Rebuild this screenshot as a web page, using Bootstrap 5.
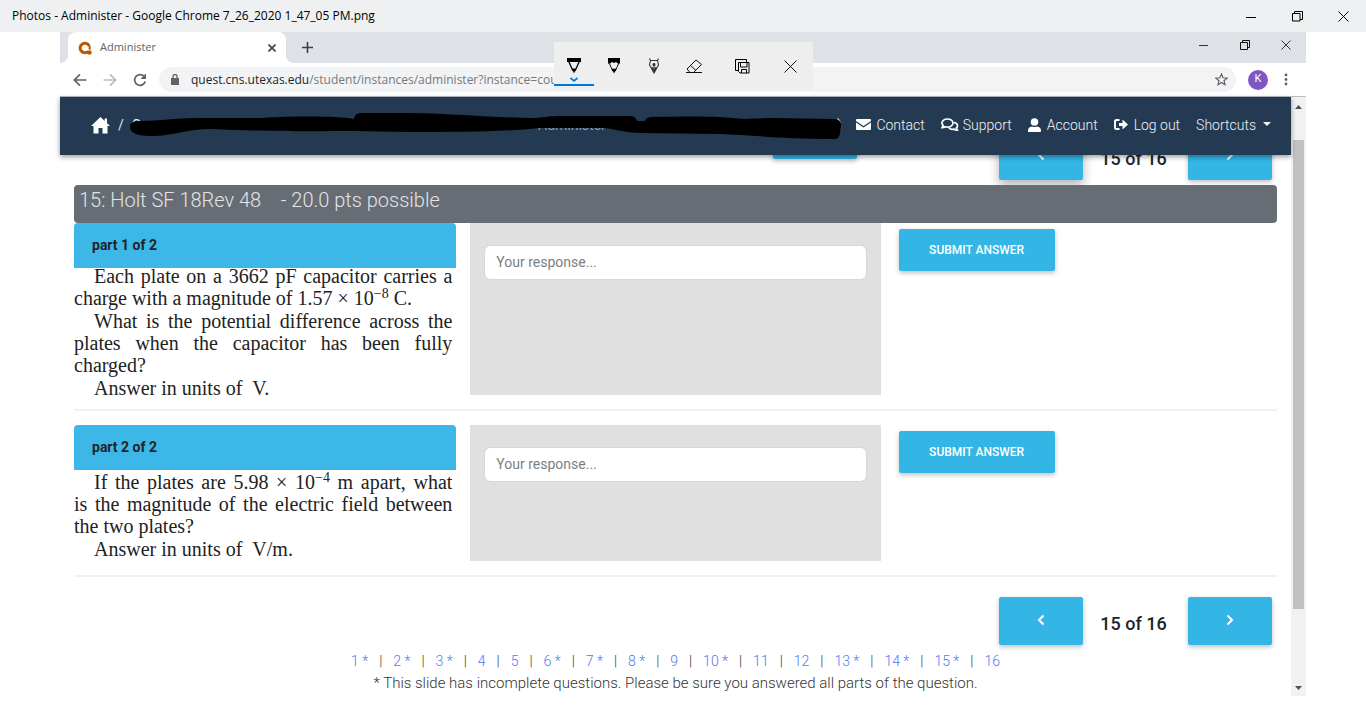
<!DOCTYPE html>
<html lang="en">
<head>
<meta charset="utf-8">
<meta name="viewport" content="width=device-width, initial-scale=1">
<title>Photos - Administer</title>
<link href="https://cdn.jsdelivr.net/npm/bootstrap@5.3.0/dist/css/bootstrap.min.css" rel="stylesheet">
<style>
body { font-family: Roboto, sans-serif; font-size: 14px; color: #212529; background: #fff; }
button { background: none; border: 0; padding: 0; color: inherit; }
svg { display: block; flex: none; }
a { text-decoration: none; }
.ui-font { font-family: "Open Sans", sans-serif; }
.photos-bar { height: 32px; background: #eff0f1; color: #000; font-size: 12px; padding-left: 12px; }
.photos-bar button { width: 46px; height: 32px; }
.browser { margin: 0 60px 32px; }
.tab-strip { height: 31px; background: #dee1e6; padding-left: 8px; }
.tab-strip .win-btn { width: 41px; height: 26px; color: #222; }
.page-tab { position: relative; width: 218px; background: #fff; border-radius: 8px 8px 0 0; padding: 0 10px; font-size: 11px; color: #5f6368; }
.page-tab::before, .page-tab::after { content: ""; position: absolute; bottom: 0; width: 8px; height: 8px; }
.page-tab::before { left: -8px; background: radial-gradient(circle at 0 0, #dee1e6 8px, #fff 8px); }
.page-tab::after { right: -8px; background: radial-gradient(circle at 100% 0, #dee1e6 8px, #fff 8px); }
.tool-row { height: 34px; padding: 0 18px 0 13px; border-bottom: 1px solid #b9bcc0; color: #5f6368; }
.address { height: 25px; border-radius: 13px; background: #f1f3f4; padding: 0 8px 0 12px; margin-left: 12px; font-size: 12px; color: #77797c; }
.avatar { width: 20px; height: 20px; border-radius: 50%; background: #7e57c2; color: #fff; font-size: 11px; margin: 0 16px 0 12px; }
.ink-bar { position: absolute; left: 494px; top: 10px; width: 259px; height: 48px; background: #eee; z-index: 20; }
.ink-bar button { flex: none; width: 40px; height: 48px; }
.ink-bar .wide-btn { width: 48px; }
.ink-bar .active { border-bottom: 2px solid #0078d7; height: 44px; padding-top: 14px; }
.site-nav { height: 58px; background: #243a52; color: #dfe3e8; padding: 0 20px 2px 31px; box-shadow: 0 2px 5px rgba(0,0,0,.4); z-index: 5; position: relative; }
.site-nav a { color: #f1f3f5; }
.nav-right { font-weight: 300; }
.scribble { position: absolute; left: 70px; top: 15px; }
.crumb-here { position: absolute; left: 478px; color: #8e9aa7; }
.crumb-end { position: absolute; left: 777px; }
.gutter { padding: 0 14px; }
.scrolled { margin-top: -23px; }
.pager { padding-right: 5px; }
.btn-sky { background: #33b5e5; color: #fff; border-radius: 2px; box-shadow: 0 2px 5px rgba(0,0,0,.25); display: flex; align-items: center; justify-content: center; font-size: 12px; font-weight: 500; }
.btn-page { width: 84px; height: 48px; padding-bottom: 3px; }
.btn-raised { box-shadow: 0 5px 11px rgba(0,0,0,.3); }
.btn-peek { width: 84px; height: 27px; margin-right: 142px; }
.btn-submit { width: 156px; height: 42px; margin: 6px 0 0 18px; }
.page-count { width: 105px; padding-top: 3px; padding-right: 4px; font-size: 18px; font-weight: 500; line-height: 48px; height: 48px; }
.q-title { margin-top: 5px; height: 38px; padding-left: 5px; border-radius: 4px; background: #666d75; color: #e4e4e4; font-size: 20px; font-weight: 300; line-height: 30px; white-space: pre; }
.part-head { height: 45px; padding-left: 18px; background: #3cb7e7; border-radius: 4px 4px 0 0; font-weight: 700; line-height: 44px; }
.tex { font-family: "Liberation Serif", serif; font-size: 20px; line-height: 22px; margin-right: 4px; padding: 1px 0; color: #222; }
.tex p { margin: 0 0 1px; text-indent: 20px; text-align: justify; }
.tex p:last-child { margin: 0; }
.tex .full { text-align-last: justify; display: block; }
.tex .next { text-indent: 0; display: block; }
.tex sup { font-size: 14px; line-height: 0; }
.tex-first { margin-top: -4px; margin-bottom: -5px; }
.answer { background: #e0e0e0; padding: 22px 14px 0; }
.answer .form-control { height: 35px; font-size: 14px; padding: 0 11px 2px; border-color: #d5d9de; }
.answer .form-control::placeholder { color: #7b8086; }
.rule { height: 2px; background: #f1f1f1; margin: 14px 0; }
.bottom-pager { margin-top: 20px; }
.slides { font-weight: 300; gap: 11px; line-height: 22px; margin-top: 5px; color: #333; }
.slides a { color: #4d79f6; }
.note { font-size: 15px; font-weight: 300; line-height: 22px; color: #333; }
.track { width: 15px; background: #f1f1f1; padding: 4px 0 6px; }
.thumb { width: 11px; background: #c1c1c1; height: 469px; margin-top: 31px; }
</style>
</head>
<body class="d-flex flex-column min-vh-100">
<header class="photos-bar ui-font d-flex align-items-center">
  <span class="me-auto">Photos - Administer - Google Chrome 7_26_2020 1_47_05 PM.png</span>
  <button aria-label="Minimize"><svg class="mx-auto" width="11" height="11" stroke="#000"><path d="M0 6.500h10"/></svg></button>
  <button aria-label="Restore"><svg class="mx-auto" width="11" height="11" fill="none" stroke="#000"><path d="M.5 2.500h7.500v7.500H.5zM2.500 2.500v-2h8v8H8"/></svg></button>
  <button aria-label="Close"><svg class="mx-auto" width="11" height="11" stroke="#000"><path d="M.5.500l10 10M10.500.500l-10 10"/></svg></button>
</header>

<div class="browser position-relative flex-grow-1 d-flex flex-column">
  <div class="tab-strip ui-font d-flex">
    <div class="page-tab d-flex align-items-center">
      <svg width="14" height="14" viewBox="0 0 14 14"><path d="M10.500 10.200A4.800 4.800 0 1 1 11.300 5" fill="none" stroke="#bf5700" stroke-width="3"/><path d="M11 4.500Q12.500 6.500 11.300 8.500" fill="none" stroke="#bf5700" stroke-width="2"/><circle cx="11.500" cy="11.500" r="2.200" fill="#bf5700"/></svg>
      <span class="ms-2 me-auto">Administer</span>
      <button aria-label="Close tab"><svg width="8" height="8" stroke="#3c4043" stroke-width="1.600"><path d="M.5.500l7 7M7.500.500l-7 7"/></svg></button>
    </div>
    <button class="ms-3 me-auto" aria-label="New tab"><svg width="11" height="11" stroke="#3c4043" stroke-width="1.600"><path d="M0 5.500h11M5.500 0v11"/></svg></button>
    <button class="win-btn" aria-label="Minimize"><svg class="mx-auto" width="10" height="10" stroke="#333"><path d="M0 5.500h9"/></svg></button>
    <button class="win-btn" aria-label="Restore"><svg class="mx-auto" width="10" height="10" fill="none" stroke="#111"><path d="M.5 2.500h7v7h-7zM2.500 2.500v-2h7v7h-2"/></svg></button>
    <button class="win-btn" aria-label="Close"><svg class="mx-auto" width="10" height="10" stroke="#333"><path d="M.5.500l9 9M9.500.500l-9 9"/></svg></button>
  </div>
  <div class="tool-row d-flex align-items-center">
    <button aria-label="Back"><svg width="14" height="14" fill="none" stroke="#5f6368" stroke-width="1.700"><path d="M13.500 7H1.500M7 1.300L1.300 7 7 12.700"/></svg></button>
    <button class="ms-3" aria-label="Forward"><svg width="14" height="14" fill="none" stroke="#babcbe" stroke-width="1.700"><path d="M.5 7h12M7 1.300L12.700 7 7 12.700"/></svg></button>
    <button class="ms-3" aria-label="Reload"><svg width="14" height="14" fill="none" stroke="#5f6368" stroke-width="1.800"><path d="M12.200 8.500A5.400 5.400 0 1 1 11 3.300"/><path d="M13 .5V6H7.500z" fill="#5f6368" stroke="none"/></svg></button>
    <div class="address ui-font d-flex align-items-center flex-grow-1">
      <svg width="8" height="11"><path d="M0 4h8v7H0z" fill="#5f6368"/><path d="M2 4V2.500a2 2 0 0 1 4 0V4" fill="none" stroke="#5f6368" stroke-width="1.300"/></svg>
      <span class="ms-2 ps-1 me-auto"><span class="text-dark">quest.cns.utexas.edu</span>/student/instances/administer?instance=cou</span>
      <button aria-label="Bookmark"><svg width="13" height="13" viewBox="0 0 13 13" fill="none" stroke="#5f6368" stroke-width="1.200"><path d="M6.500 1l1.600 3.800 4 .3-3.100 2.600 1 4-3.500-2.200L3 11.700l1-4L.9 5.100l4-.3z"/></svg></button>
    </div>
    <button class="avatar" aria-label="Profile">K</button>
    <button aria-label="Menu"><svg width="4" height="13" fill="#5f6368"><circle cx="2" cy="2" r="1.400"/><circle cx="2" cy="6.500" r="1.400"/><circle cx="2" cy="11" r="1.400"/></svg></button>
  </div>

  <div class="ink-bar d-flex">
    <button class="active" aria-label="Ballpoint pen"><svg class="mx-auto" width="16" height="28" viewBox="0 0 16 28"><path d="M1 2h14v4H1zM6 12.500h4l-2 5z"/><path d="M2.500 5L7 15M13.500 5L9 15" stroke="#000" stroke-width="1.300"/><path d="M4.500 22l3.500 3 3.500-3" fill="none" stroke="#0078d7" stroke-width="1.700"/></svg></button>
    <button aria-label="Pencil"><svg class="mx-auto" width="14" height="16"><path d="M1 0h12v5.500H1zM4.500 10.500h5l-2.500 5z"/><path d="M2 4l4 9M12 4l-4 9" stroke="#000" stroke-width="1.400"/><path d="M3 5.500l2-1.500 2 1 2-1 2 1.500-2 5H5z" fill="#eee"/></svg></button>
    <button aria-label="Calligraphy pen"><svg class="mx-auto" width="12" height="16" fill="none" stroke="#333" stroke-width="1.100"><path d="M1.500.500l1 2h7l1-2M2.500 2.500L1.500 7 6 15l4.500-8-1-4.500M4 9l2 5 2-5M6 13V6"/><circle cx="6" cy="6.500" r="1" fill="#222"/></svg></button>
    <button aria-label="Eraser"><svg class="mx-auto" width="17" height="15" fill="none" stroke="#111"><path d="M1 10L10 1l5.500 4.500-8 8H4zM4.500 6.500l5.500 5M7 13.500h9M0 13.500h4"/></svg></button>
    <button class="wide-btn ms-1" aria-label="Save"><svg class="mx-auto" width="15" height="15" fill="none" stroke="#000"><path d="M3.500 3.500h10.500v10.500H5L3.500 12.500zM5.500 3.500v4.500h6.500V3.500M6.500 14v-3.500h5V14M3 11.500H.500V.500h11V3"/></svg></button>
    <button class="wide-btn" aria-label="Close inking"><svg class="mx-auto" width="13" height="13" stroke="#111"><path d="M.5.500l12 12M12.500.500l-12 12"/></svg></button>
  </div>

  <div class="d-flex flex-grow-1">
    <main class="flex-grow-1">
      <nav class="site-nav d-flex align-items-center">
        <a href="#" aria-label="Home"><svg width="19" height="17" viewBox="0 0 19 17" fill="#fff"><path d="M9.500 0L0 9h2.500v7.500H7.500V11h4v5.500h5V9H19l-3-3V1.500h-2.300V4z"/></svg></a>
        <span class="ms-2 me-2">/</span><a href="#">C</a>
        <span class="crumb-here">Administer</span><span class="crumb-end">)</span>
        <svg class="scribble" width="714" height="28" viewBox="130 112 714 28"><path d="M130 127C130 122 134 121 140 121C160 121 175 118 195 118L260 118C300 116 335 116 354 119C355 115 356 113 362 113L410 113C460 114 500 118 535 118C545 117 550 116 560 116L630 116C634 116 636 118 637 121L645 121C646 118 648 117 653 117C690 116 720 116 745 119C770 117 800 119 835 119C841 120 842 124 841 128C840 131 841 139 834 139C780 139 750 135 720 134L640 133C620 132 615 129 605 128L540 128C500 132 460 132 410 132L355 131C320 131 280 132 210 129C180 130 175 136 150 136C138 136 130 133 130 127Z"/></svg>
        <div class="nav-right ms-auto d-flex align-items-center gap-3">
          <a href="#" class="d-flex align-items-center"><svg class="me-1" width="16" height="12" viewBox="0 0 16 12" fill="#fff"><path d="M0 1q0-1 1-1h13q1 0 1 1v1L7.500 7 0 2zM0 3.500L7.500 8.500 15 3.500V10q0 1-1 1H1q-1 0-1-1z"/></svg>Contact</a>
          <a href="#" class="d-flex align-items-center"><svg class="me-1" width="18" height="14" viewBox="0 0 18 14" fill="none" stroke="#fff" stroke-width="1.700"><path d="M6.500 1C3.400 1 1 2.700 1 5c0 1 .5 1.900 1.200 2.600L1 9.700c1.500 0 2.500-.4 3.200-.9 4 1 7.800-.8 7.800-3.800C12 2.700 9.600 1 6.500 1z"/><path d="M13 4.500c2 .3 3.500 1.500 3.500 3.300 0 .9-.4 1.700-1.200 2.300l1 2c-1.500 0-2.500-.4-3.200-.9-2 .4-4 0-5.200-1.200"/></svg>Support</a>
          <a href="#" class="d-flex align-items-center"><svg class="me-1" width="15" height="15" viewBox="0 0 15 15" fill="#fff"><circle cx="6.500" cy="4" r="3.800"/><path d="M0 14v-1.500Q0 9 4 8.500q2.500 1 5 0 4 .5 4 4V13q0 1-1 1z"/></svg>Account</a>
          <a href="#" class="d-flex align-items-center"><svg class="me-1" width="16" height="12" viewBox="0 0 16 12" fill="#fff"><path d="M5.500 0v2H2.500Q2 2 2 2.500v6q0 .5.500.5h3v2H2.500Q0 11 0 8.500v-6Q0 0 2.500 0zM5 4h3.500V.500L14 5.500 8.500 10.500V7H5z"/></svg>Log out</a>
          <a href="#" class="dropdown-toggle">Shortcuts&nbsp;</a>
        </div>
      </nav>
      <div class="gutter">
        <div class="scrolled pager d-flex justify-content-end">
          <button class="btn-sky btn-peek" aria-label="Save"></button>
          <button class="btn-sky btn-page btn-raised" aria-label="Previous slide"><svg width="8" height="12" fill="none" stroke="#fff" stroke-width="2"><path d="M6.500 1.500L2 6l4.500 4.500"/></svg></button>
          <span class="page-count text-center">15 of 16</span>
          <button class="btn-sky btn-page" aria-label="Next slide"><svg width="8" height="12" fill="none" stroke="#fff" stroke-width="2"><path d="M1.500 1.500L6 6l-4.500 4.500"/></svg></button>
        </div>
        <h1 class="q-title mb-0 position-relative">15: Holt SF 18Rev 48    - 20.0 pts possible</h1>
      </div>

      <section class="row g-0">
        <div class="col-4 gutter">
          <div class="part-head">part 1 of 2</div>
          <div class="tex tex-first position-relative">
            <p><span class="full">Each plate on a 3662 pF capacitor carries a</span><span class="next">charge with a magnitude of 1.57 × 10<sup>−8</sup> C.</span></p>
            <p><span class="full">What is the potential difference across the</span><span class="full next">plates when the capacitor has been fully</span><span class="next">charged?</span></p>
            <p>Answer in units of &nbsp;V.</p>
          </div>
        </div>
        <div class="col-4 answer"><input class="form-control" type="text" placeholder="Your response..." aria-label="Response to part 1"></div>
        <div class="col-4"><button class="btn-sky btn-submit">SUBMIT ANSWER</button></div>
      </section>
      <div class="gutter"><div class="rule"></div></div>
      <section class="row g-0">
        <div class="col-4 gutter">
          <div class="part-head">part 2 of 2</div>
          <div class="tex">
            <p><span class="full">If the plates are 5.98 × 10<sup>−4</sup> m apart, what</span><span class="full next">is the magnitude of the electric field between</span><span class="next">the two plates?</span></p>
            <p>Answer in units of &nbsp;V/m.</p>
          </div>
        </div>
        <div class="col-4 answer"><input class="form-control" type="text" placeholder="Your response..." aria-label="Response to part 2"></div>
        <div class="col-4"><button class="btn-sky btn-submit">SUBMIT ANSWER</button></div>
      </section>
      <div class="gutter">
        <div class="rule"></div>
        <div class="bottom-pager pager d-flex justify-content-end">
          <button class="btn-sky btn-page" aria-label="Previous slide"><svg width="8" height="12" fill="none" stroke="#fff" stroke-width="2"><path d="M6.500 1.500L2 6l4.500 4.500"/></svg></button>
          <span class="page-count text-center">15 of 16</span>
          <button class="btn-sky btn-page" aria-label="Next slide"><svg width="8" height="12" fill="none" stroke="#fff" stroke-width="2"><path d="M1.500 1.500L6 6l-4.500 4.500"/></svg></button>
        </div>
        <div class="slides d-flex justify-content-center">
          <a href="#">1 *</a>|<a href="#">2 *</a>|<a href="#">3 *</a>|<a href="#">4</a>|<a href="#">5</a>|<a href="#">6 *</a>|<a href="#">7 *</a>|<a href="#">8 *</a>|<a href="#">9</a>|<a href="#">10 *</a>|<a href="#">11</a>|<a href="#">12</a>|<a href="#">13 *</a>|<a href="#">14 *</a>|<a href="#">15 *</a>|<a href="#">16</a>
        </div>
        <div class="note text-center">* This slide has incomplete questions. Please be sure you answered all parts of the question.</div>
      </div>
    </main>
    <div class="track d-flex flex-column align-items-center justify-content-between" aria-hidden="true">
      <svg class="mt-1" width="7" height="4" fill="#505050"><path d="M0 4L3.500 0 7 4z"/></svg>
      <div class="thumb mb-auto"></div>
      <svg width="7" height="4" fill="#505050"><path d="M0 0h7L3.500 4z"/></svg>
    </div>
  </div>
</div>
<script src="https://cdn.jsdelivr.net/npm/bootstrap@5.3.0/dist/js/bootstrap.bundle.min.js"></script>
</body>
</html>
